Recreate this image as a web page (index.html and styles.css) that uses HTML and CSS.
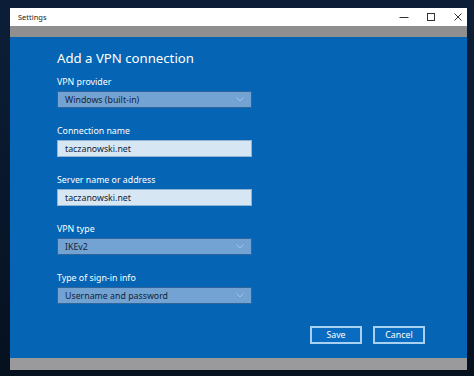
FILE: index.html
```html
<!DOCTYPE html>
<html lang="en">
<head>
    <meta charset="UTF-8">
    <title>Settings - Add a VPN connection</title>
    <link rel="stylesheet" href="styles.css">
</head>
<body>
    <div class="window">
        <!-- title bar -->
        <div class="titlebar">
            <span class="titlebar-name">Settings</span>
            <div class="titlebar-controls">
                <svg class="ctl" width="10" height="10" viewBox="0 0 10 10"><path d="M0.5 5.5h9" stroke="#333" stroke-width="1"/></svg>
                <svg class="ctl" width="10" height="10" viewBox="0 0 10 10"><rect x="1.5" y="1.5" width="7" height="7" fill="none" stroke="#333" stroke-width="1"/></svg>
                <svg class="ctl" width="10" height="10" viewBox="0 0 10 10"><path d="M1.5 1.5l7 7M8.5 1.5l-7 7" stroke="#333" stroke-width="1"/></svg>
            </div>
        </div>
        <div class="band"></div>

        <!-- dialog -->
        <div class="dialog">
            <h1 class="dialog-title">Add a VPN connection</h1>

            <div class="field">
                <div class="field-label">VPN provider</div>
                <div class="dropdown">
                    <span>Windows (built-in)</span>
                    <svg width="8" height="5" viewBox="0 0 8 5"><path d="M0.5 0.5l3.5 3.5 3.5-3.5" fill="none" stroke="#a6c5e3" stroke-width="1"/></svg>
                </div>
            </div>

            <div class="field">
                <div class="field-label">Connection name</div>
                <div class="textbox">taczanowski.net</div>
            </div>

            <div class="field">
                <div class="field-label">Server name or address</div>
                <div class="textbox">taczanowski.net</div>
            </div>

            <div class="field">
                <div class="field-label">VPN type</div>
                <div class="dropdown">
                    <span>IKEv2</span>
                    <svg width="8" height="5" viewBox="0 0 8 5"><path d="M0.5 0.5l3.5 3.5 3.5-3.5" fill="none" stroke="#a6c5e3" stroke-width="1"/></svg>
                </div>
            </div>

            <div class="field">
                <div class="field-label">Type of sign-in info</div>
                <div class="dropdown">
                    <span>Username and password</span>
                    <svg width="8" height="5" viewBox="0 0 8 5"><path d="M0.5 0.5l3.5 3.5 3.5-3.5" fill="none" stroke="#a6c5e3" stroke-width="1"/></svg>
                </div>
            </div>

            <div class="btn-group">
                <button class="btn">Save</button>
                <button class="btn">Cancel</button>
            </div>
        </div>
        <div class="band band-bottom"></div>
    </div>
</body>
</html>
```

FILE: styles.css
```css
/* base */
body {
    margin: 0;
    height: 376px;
    overflow: hidden;
    font-family: "Noto Sans", "Open Sans", Arial, sans-serif;
    background: linear-gradient(180deg, #0c1e38 0%, #081629 60%, #06111f 100%);
}

.window {
    width: 457px;
    margin: 8px 0 0 10px;
}

/* title bar */
.titlebar {
    height: 18px;
    background: #ffffff;
    display: flex;
    align-items: center;
    justify-content: space-between;
}

.titlebar-name {
    font-size: 7.5px;
    color: #222;
    padding-left: 8px;
}

.titlebar-controls {
    display: flex;
    gap: 17px;
    padding-right: 4px;
}

.ctl {
    display: block;
}

.band {
    height: 11px;
    background: #8f8f8f;
}

.band-bottom {
    height: 12px;
    background: #9a9a9c;
}

/* dialog */
.dialog {
    height: 321px;
    box-sizing: border-box;
    background: #0565b4;
    padding: 11px 0 0 47px;
    color: #fff;
}

.dialog-title {
    margin: 0 0 7px;
    font-size: 13.2px;
    line-height: 20px;
    font-weight: 400;
}

.field {
    width: 195px;
    margin-bottom: 16px;
}

.field-label {
    font-size: 8.8px;
    line-height: 14px;
    margin-bottom: 2px;
}

.dropdown,
.textbox {
    height: 17px;
    box-sizing: border-box;
    display: flex;
    align-items: center;
    justify-content: space-between;
    padding: 0 7px 0 7px;
    font-size: 8.8px;
    color: #12243a;
}

.dropdown {
    background: #72a3d3;
    border: 1px solid #2f659a;
}

.textbox {
    background: #d6e6f3;
    border: 1px solid #8fb4d6;
}

/* buttons */
.btn-group {
    display: flex;
    justify-content: flex-end;
    gap: 11px;
    width: 368px;
    margin-top: 22px;
}

.btn {
    width: 52px;
    height: 18px;
    padding: 0;
    font-family: inherit;
    font-size: 8.8px;
    color: #fff;
    background: #0a6cc0;
    border: 2px solid #a9d0f1;
    cursor: pointer;
}
```
